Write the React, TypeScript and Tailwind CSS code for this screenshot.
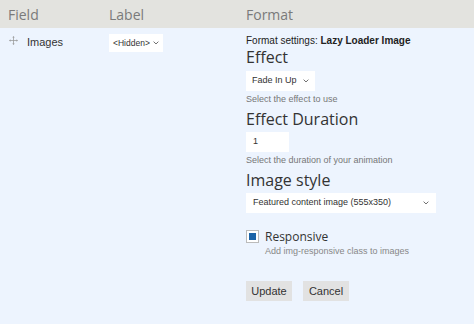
import React from "react";

const Chevron = ({ className = "" }: { className?: string }) => (
  <svg viewBox="0 0 10 6" className={className} fill="none" stroke="#555" strokeWidth="1.4" strokeLinecap="round" strokeLinejoin="round">
    <path d="M1.5 1.2 L5 4.6 L8.5 1.2" />
  </svg>
);

const Move = () => (
  <svg viewBox="0 0 12 12" className="w-[9px] h-[9px]" fill="#999">
    <path d="M6 0 L7.6 2 H6.5 V5.5 H10 V4.4 L12 6 L10 7.6 V6.5 H6.5 V10 H7.6 L6 12 L4.4 10 H5.5 V6.5 H2 V7.6 L0 6 L2 4.4 V5.5 H5.5 V2 H4.4 Z" />
  </svg>
);

export default function App() {
  const sans = { fontFamily: "'Liberation Sans', Arial, sans-serif" };
  const open = { fontFamily: "'Open Sans', 'Noto Sans', sans-serif" };
  return (
    <div className="w-[474px] h-[324px] bg-[#edf4fe] overflow-hidden" style={sans}>
      <div className="h-[28px] bg-[#e3e3df] flex items-center text-[14px] text-[#7a7a7a]" style={open}>
        <div className="w-[109px] pl-[8px]">Field</div>
        <div className="w-[137px]">Label</div>
        <div>Format</div>
      </div>
      <div className="flex">
        <div className="w-[109px] flex items-start pt-[6px]">
          <div className="w-[27px] flex justify-center pt-[2px]"><Move /></div>
          <div className="text-[11px] text-[#333]">Images</div>
        </div>
        <div className="w-[137px] pt-[6px]">
          <div className="w-[54px] h-[18px] bg-white flex items-center pl-[4px] gap-[3px] text-[8.5px] text-[#333]">
            <span>&lt;Hidden&gt;</span>
            <Chevron className="w-[6px] h-[4px]" />
          </div>
        </div>
        <div className="flex-1 pt-[7px]">
          <div className="text-[10px] text-[#222] leading-[12px]">
            Format settings: <span className="font-bold">Lazy Loader Image</span>
          </div>
          <div className="text-[16px] text-[#333] leading-[20px]" style={open}>Effect</div>
          <div className="mt-[4px] w-[69px] h-[20px] bg-white flex items-center justify-between pl-[6px] pr-[6px] text-[9px] text-[#333]">
            <span>Fade In Up</span>
            <Chevron className="w-[6px] h-[4px]" />
          </div>
          <div className="text-[9px] text-[#777] mt-[3px] leading-[11px]">Select the effect to use</div>
          <div className="text-[16px] text-[#333] leading-[20px] mt-[4px]" style={open}>Effect Duration</div>
          <div className="mt-[3px] w-[43px] h-[20px] bg-white flex items-center pl-[7px] text-[9px] text-[#333]">1</div>
          <div className="text-[9px] text-[#777] mt-[3px] leading-[11px]">Select the duration of your animation</div>
          <div className="text-[16px] text-[#333] leading-[20px] mt-[4px]" style={open}>Image style</div>
          <div className="mt-[3px] w-[190px] h-[20px] bg-white flex items-center justify-between pl-[7px] pr-[7px] text-[9px] text-[#333]">
            <span>Featured content image (555x350)</span>
            <Chevron className="w-[6px] h-[4px]" />
          </div>
          <div className="mt-[16px] flex items-start gap-[6px]">
            <div className="w-[13px] h-[13px] bg-white border border-[#bbb] flex items-center justify-center mt-[1px]">
              <div className="w-[7px] h-[7px] bg-[#1c64a8]" />
            </div>
            <div className="flex flex-col gap-[1px]">
              <div className="text-[12px] text-[#333] leading-[16px]" style={open}>Responsive</div>
              <div className="text-[9px] text-[#888] leading-[10px]">Add img-responsive class to images</div>
            </div>
          </div>
          <div className="mt-[25px] flex gap-[11px]">
            <div className="w-[46px] h-[20px] bg-[#e2e2e2] flex items-center justify-center text-[11px] text-[#333]">Update</div>
            <div className="w-[46px] h-[20px] bg-[#e2e2e2] flex items-center justify-center text-[11px] text-[#333]">Cancel</div>
          </div>
        </div>
      </div>
    </div>
  );
}
